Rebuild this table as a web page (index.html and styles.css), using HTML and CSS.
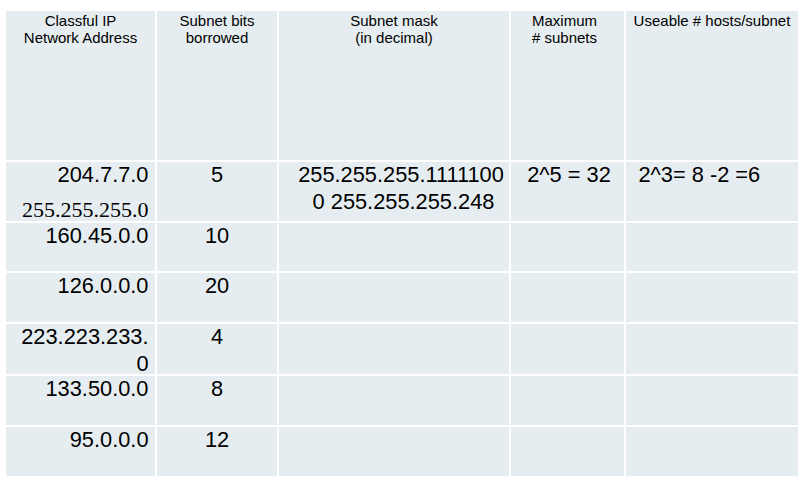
FILE: index.html
```html
<!DOCTYPE html>
<html>
<head>
<meta charset="utf-8">
<link rel="stylesheet" href="styles.css">
</head>
<body>
<div class="table">
  <div class="cell head">Classful IP<br>Network Address</div>
  <div class="cell head">Subnet bits<br>borrowed</div>
  <div class="cell head">Subnet mask<br>(in decimal)</div>
  <div class="cell head max">Maximum<br># subnets</div>
  <div class="cell head">Useable # hosts/subnet</div>

  <div class="cell addr"><div>204.7.7.0</div><div class="serif">255.255.255.0</div></div>
  <div class="cell bits">5</div>
  <div class="cell mask"><div>255.255.255.1111100</div><div class="l2">0 255.255.255.248</div></div>
  <div class="cell subnets">2^5 = 32</div>
  <div class="cell hosts">2^3= 8 -2 =6</div>

  <div class="cell addr">160.45.0.0</div>
  <div class="cell bits">10</div>
  <div class="cell"></div>
  <div class="cell"></div>
  <div class="cell"></div>

  <div class="cell addr">126.0.0.0</div>
  <div class="cell bits">20</div>
  <div class="cell"></div>
  <div class="cell"></div>
  <div class="cell"></div>

  <div class="cell addr">223.223.233.<br>0</div>
  <div class="cell bits">4</div>
  <div class="cell"></div>
  <div class="cell"></div>
  <div class="cell"></div>

  <div class="cell addr">133.50.0.0</div>
  <div class="cell bits">8</div>
  <div class="cell"></div>
  <div class="cell"></div>
  <div class="cell"></div>

  <div class="cell addr">95.0.0.0</div>
  <div class="cell bits">12</div>
  <div class="cell"></div>
  <div class="cell"></div>
  <div class="cell"></div>
</div>
</body>
</html>
```
FILE: styles.css
```css
html, body {
  margin: 0;
  padding: 0;
  background: #ffffff;
}

body {
  font-family: "Liberation Sans", Arial, sans-serif;
  color: #000000;
}

.table {
  display: grid;
  grid-template-columns: 149px 120px 230px 113px 172px;
  grid-template-rows: 149px 59px 48px 49px 50px 49px 49px;
  gap: 2px;
  width: max-content;
  margin: 11px 0 0 6px;
  background: #ffffff;
}

.cell {
  background: #e6edf0;
  font-size: 21.8px;
  line-height: 26.7px;
  box-sizing: border-box;
}

.head {
  font-size: 15px;
  line-height: 17.25px;
  text-align: center;
  padding-top: 1px;
}

.head.max {
  padding-right: 6px;
}

.addr {
  text-align: right;
  padding-right: 6.5px;
}

.serif {
  font-family: "Liberation Serif", "Times New Roman", serif;
  font-size: 22px;
  margin-top: 8px;
}

.bits {
  text-align: center;
}

.mask {
  text-align: center;
  padding-left: 14px;
}

.mask .l2 {
  padding-left: 5px;
}

.subnets {
  text-align: center;
  padding-left: 3px;
}

.hosts {
  padding-left: 12.5px;
}
```
